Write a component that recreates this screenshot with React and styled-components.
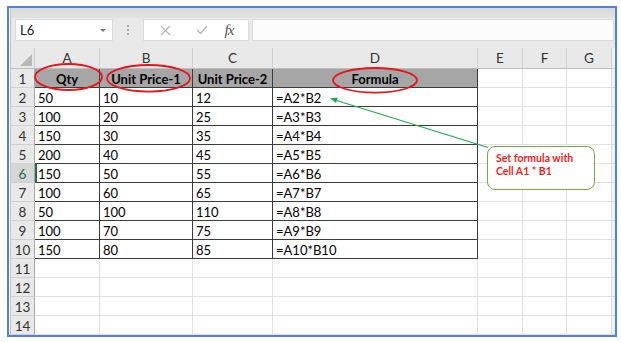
import React from "react";
import styled, { createGlobalStyle } from "styled-components";

const GlobalStyle = createGlobalStyle`
  html, body {
    margin: 0;
    padding: 0;
    background: #fff;
  }
  body {
    font-family: Lato, "Liberation Sans", sans-serif;
  }
`;

const Page = styled.div`
  position: relative;
  width: 621px;
  height: 342px;
  padding: 6px 0 0 7px;
  box-sizing: border-box;
`;

const Frame = styled.div`
  width: 610px;
  height: 331px;
  box-sizing: border-box;
  border: 2px solid #4f81d6;
  background: #fff;
  padding-left: 1px;
  display: flex;
`;

const Window = styled.div`
  flex: 1;
  display: flex;
  flex-direction: column;
  background: #e9e9e9;
  border-left: 1px solid #c3c3c3;
`;

const TopStrip = styled.div`
  height: 10px;
  background: linear-gradient(#d9d9d9, #e2e2e2);
`;

const FormulaBar = styled.div`
  height: 30px;
  box-sizing: border-box;
  display: flex;
  align-items: flex-start;
  padding: 1px 1px 0 4px;
`;

const NameBox = styled.div`
  width: 98px;
  height: 22px;
  box-sizing: border-box;
  background: #fff;
  border: 1px solid #dcdcdc;
  display: flex;
  align-items: center;
  justify-content: space-between;
  padding: 0 6px 0 4px;
  font-size: 13px;
  color: #222;
`;

const Caret = styled.span`
  width: 0;
  height: 0;
  border-left: 3px solid transparent;
  border-right: 3px solid transparent;
  border-top: 3px solid #7a7a7a;
`;

const Grip = styled.div`
  width: 30px;
  height: 22px;
  display: flex;
  flex-direction: column;
  align-items: center;
  justify-content: center;
  gap: 2px;
`;

const Dot = styled.span`
  width: 2px;
  height: 2px;
  background: #a8a8a8;
`;

const FxBox = styled.div`
  width: 106px;
  height: 22px;
  box-sizing: border-box;
  background: #fff;
  border: 1px solid #dcdcdc;
  display: grid;
  grid-template-columns: 35px 37px 1fr;
  align-items: center;
  justify-items: center;
  padding-left: 4px;
`;

const Fx = styled.span`
  font-family: "Liberation Serif", serif;
  font-style: italic;
  font-size: 15px;
  color: #555;
  letter-spacing: -1px;
  padding-right: 10px;
`;

const Input = styled.div`
  flex: 1;
  height: 22px;
  margin-left: 3px;
  box-sizing: border-box;
  background: #fcfcfc;
  border: 1px solid #dcdcdc;
`;

const Sheet = styled.div`
  display: grid;
  grid-template-columns: 24px 65px 93px 80px 205px 45px 44px 45px 1fr;
  grid-template-rows: 21px repeat(14, 19px);
  font-size: 13px;
`;

const Corner = styled.div`
  box-sizing: border-box;
  border-right: 1px solid #cdcdcd;
  border-bottom: 1px solid #bdbdbd;
  display: flex;
  align-items: flex-end;
  justify-content: flex-end;
  padding: 0 2px 2px 0;
`;

const ColHead = styled.div`
  box-sizing: border-box;
  border-right: 1px solid #d0d0d0;
  border-bottom: 1px solid #bdbdbd;
  display: flex;
  align-items: flex-end;
  justify-content: center;
  padding-bottom: 2px;
  color: #333;
  font-size: 13.5px;
`;

const RowHead = styled.div`
  box-sizing: border-box;
  border-right: 1px solid #a9a9a9;
  border-bottom: 1px solid #d0d0d0;
  display: flex;
  align-items: center;
  justify-content: center;
  padding-top: 1px;
  font-size: 13.5px;
  color: ${(p) => (p.$active ? "#217346" : "#333")};
  background: ${(p) => (p.$active ? "#d6d6d6" : "transparent")};
`;

const Cell = styled.div`
  box-sizing: border-box;
  background: ${(p) => (p.$head ? "#a6a6a6" : "#fff")};
  border-right: 1px solid ${(p) => (p.$table ? "#3c3c3c" : "#e1e1e1")};
  border-bottom: 1px solid ${(p) => (p.$table ? "#3c3c3c" : "#e1e1e1")};
  border-left: ${(p) => (p.$active ? "2px solid #217346" : "none")};
  display: flex;
  align-items: center;
  justify-content: ${(p) => (p.$head ? "center" : "flex-start")};
  padding: 1px 0 0 ${(p) => (p.$head ? 0 : p.$active ? 1 : 3)}px;
  font-weight: ${(p) => (p.$head ? 700 : 400)};
  color: #000;
  white-space: nowrap;
`;

const Edge = styled.div`
  background: #f2f2f2;
  border-bottom: 1px solid #d8d8d8;
`;

const Overlay = styled.svg`
  position: absolute;
  left: 0;
  top: 0;
  pointer-events: none;
`;

const Callout = styled.div`
  position: absolute;
  left: 487px;
  top: 146px;
  width: 108px;
  height: 44px;
  box-sizing: border-box;
  border: 1.5px solid #70ad47;
  border-radius: 8px;
  background: #fff;
  padding: 5px 0 0 8px;
  color: #ff1a1a;
  font-weight: 700;
  font-size: 10.5px;
  line-height: 13px;
`;

const columns = ["A", "B", "C", "D", "E", "F", "G"];
const headers = ["Qty", "Unit Price-1", "Unit Price-2", "Formula"];
const data = [
  ["50", "10", "12", "=A2*B2"],
  ["100", "20", "25", "=A3*B3"],
  ["150", "30", "35", "=A4*B4"],
  ["200", "40", "45", "=A5*B5"],
  ["150", "50", "55", "=A6*B6"],
  ["100", "60", "65", "=A7*B7"],
  ["50", "100", "110", "=A8*B8"],
  ["100", "70", "75", "=A9*B9"],
  ["150", "80", "85", "=A10*B10"],
];

function Row({ n }) {
  const values = n === 1 ? headers : data[n - 2] || [];
  const inTable = n <= 10;
  return (
    <>
      <RowHead $active={n === 6}>{n}</RowHead>
      {columns.map((c, i) => (
        <Cell
          key={c}
          $table={inTable && i < 4}
          $head={n === 1 && i < 4}
          $active={n === 6 && i === 0}
        >
          {i < 4 ? values[i] : ""}
        </Cell>
      ))}
      <Edge />
    </>
  );
}

export default function App() {
  return (
    <Page>
      <GlobalStyle />
      <Frame>
        <Window>
          <TopStrip />
          <FormulaBar>
            <NameBox>
              L6
              <Caret />
            </NameBox>
            <Grip>
              <Dot />
              <Dot />
              <Dot />
            </Grip>
            <FxBox>
              <svg width="11" height="11" viewBox="0 0 11 11">
                <path d="M1 1 L10 10 M10 1 L1 10" stroke="#b4b4b4" strokeWidth="1.2" fill="none" />
              </svg>
              <svg width="12" height="10" viewBox="0 0 12 10">
                <path d="M1 5 L4.5 8.5 L11 1" stroke="#b4b4b4" strokeWidth="1.3" fill="none" />
              </svg>
              <Fx>fx</Fx>
            </FxBox>
            <Input />
          </FormulaBar>
          <Sheet>
            <Corner>
              <svg width="12" height="12" viewBox="0 0 12 12">
                <path d="M12 0 L12 12 L0 12 Z" fill="#b8b8b8" />
              </svg>
            </Corner>
            {columns.map((c) => (
              <ColHead key={c}>{c}</ColHead>
            ))}
            <Edge />
            {Array.from({ length: 14 }, (_, i) => (
              <Row key={i} n={i + 1} />
            ))}
          </Sheet>
        </Window>
      </Frame>
      <Overlay width="621" height="342" viewBox="0 0 621 342">
        <g fill="none" stroke="#e8141b" strokeWidth="1.8">
          <ellipse cx="68.5" cy="77" rx="33.5" ry="13" />
          <ellipse cx="148.5" cy="78.3" rx="41.5" ry="13.3" />
          <ellipse cx="375" cy="80.3" rx="42" ry="12.3" />
        </g>
        <line x1="488" y1="147.5" x2="335" y2="100" stroke="#1fae4b" strokeWidth="1.2" />
        <polygon points="330,98.2 337.8,97.6 336,103" fill="#1fae4b" />
      </Overlay>
      <Callout>
        Set formula with
        <br />
        Cell A1 * B1
      </Callout>
    </Page>
  );
}
